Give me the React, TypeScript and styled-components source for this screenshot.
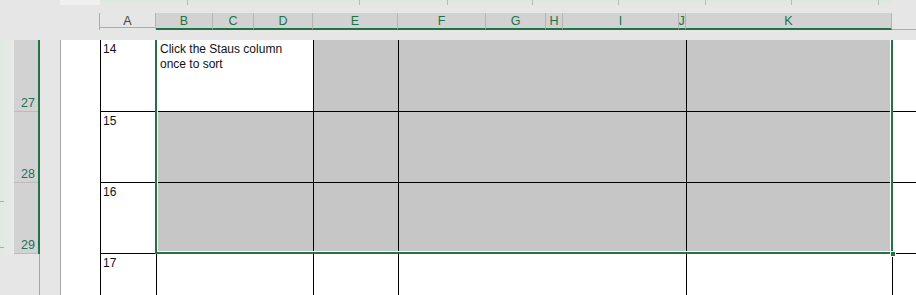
import React from "react";
import styled, { createGlobalStyle } from "styled-components";

const GREEN = "#217346";

const GlobalStyle = createGlobalStyle`
  html, body {
    margin: 0;
    padding: 0;
    background: #e6e6e6;
    overflow: hidden;
  }
`;

const headerCols = [
  { label: "A", width: 56, selected: false },
  { label: "B", width: 57, selected: true },
  { label: "C", width: 41, selected: true },
  { label: "D", width: 59, selected: true },
  { label: "E", width: 85, selected: true },
  { label: "F", width: 88, selected: true },
  { label: "G", width: 60, selected: true },
  { label: "H", width: 17, selected: true },
  { label: "I", width: 116, selected: true },
  { label: "J", width: 7, selected: true },
  { label: "K", width: 206, selected: true },
];

const ticks = [87, 259, 347, 432, 518, 605, 691, 778];

const rowHeaders = [
  { label: "27", height: 72 },
  { label: "28", height: 71 },
  { label: "29", height: 71 },
];

type CellKind = "white" | "grey";

const rows: { num: string; height: number; cells: CellKind[]; note?: string }[] = [
  { num: "14", height: 72, cells: ["white", "grey", "grey", "grey"], note: "Click the Staus column once to sort" },
  { num: "15", height: 71, cells: ["grey", "grey", "grey", "grey"] },
  { num: "16", height: 71, cells: ["grey", "grey", "grey", "grey"] },
  { num: "17", height: 60, cells: ["white", "white", "white", "white"] },
];

// widths of the merged body columns, each including its 1px right border
const bodyWidths = [56, 157, 85, 288, 206];

const Page = styled.div`
  width: 916px;
  height: 295px;
  background: #e6e6e6;
  font-family: "Liberation Sans", Arial, sans-serif;
  display: flex;
  flex-direction: column;
  overflow: hidden;
`;

const TopStrip = styled.div`
  height: 13px;
  display: flex;
  flex-shrink: 0;
`;

const StripBlank = styled.div<{ $w: number }>`
  width: ${(p) => p.$w}px;
  flex-shrink: 0;
`;

const StripLight = styled.div`
  width: 40px;
  height: 5px;
  background: #f0f0f0;
`;

const StripRuler = styled.div`
  position: relative;
  width: 792px;
  height: 5px;
  background: linear-gradient(#dce8df, #e4e8e5);
`;

const Tick = styled.span`
  position: absolute;
  top: 0;
  width: 1px;
  height: 5px;
  background: #b8bcb9;
`;

const HeaderRow = styled.div`
  height: 17px;
  display: flex;
  flex-shrink: 0;
`;

const HeaderLead = styled.div`
  width: 99px;
  flex-shrink: 0;
`;

const HeaderCells = styled.div`
  display: flex;
  border-left: 1px solid #ababab;
`;

const ColHead = styled.div<{ $w: number; $sel: boolean }>`
  width: ${(p) => p.$w - 1}px;
  height: 15px;
  border-right: 1px solid #b4b4b4;
  border-bottom: 2px solid ${(p) => (p.$sel ? GREEN : "transparent")};
  box-shadow: ${(p) => (p.$sel ? "none" : "inset 0 -1px 0 #ababab")};
  background: ${(p) => (p.$sel ? "#d2d2d2" : "#e6e6e6")};
  color: ${(p) => (p.$sel ? GREEN : "#444")};
  font-size: 12.5px;
  line-height: 16px;
  text-align: center;
  overflow: hidden;
  flex-shrink: 0;
`;

const HeaderTail = styled.div`
  flex: 1;
  height: 16px;
  border-bottom: 1px solid #ababab;
`;

const Band = styled.div`
  height: 10px;
  flex-shrink: 0;
`;

const Body = styled.div`
  flex: 1;
  display: flex;
  overflow: hidden;
`;

const LeftRail = styled.div`
  width: 100px;
  display: flex;
  flex-shrink: 0;
`;

const Gutter = styled.div`
  width: 14px;
  display: flex;
  flex-direction: column;
`;

const GutterTinted = styled.div`
  height: 214px;
  background: linear-gradient(90deg, #dfe9e2, #e8ebe9);
  display: flex;
  flex-direction: column;
  justify-content: flex-end;
  gap: 45px;
  padding-bottom: 6px;
  box-sizing: border-box;
`;

const GutterTick = styled.span`
  width: 4px;
  height: 1px;
  background: #a9a9a9;
`;

const RowHeads = styled.div`
  width: 25px;
  display: flex;
  flex-direction: column;
  border-right: 1px solid #a6a6a6;
`;

const RowHeadStack = styled.div`
  display: flex;
  flex-direction: column;
  border-right: 2px solid ${GREEN};
  margin-right: -1px;
`;

const RowHead = styled.div<{ $h: number }>`
  height: ${(p) => p.$h - 1}px;
  border-bottom: 1px solid #bcbcbc;
  background: #d2d2d2;
  color: #1f6f5a;
  font-size: 12.5px;
  display: flex;
  align-items: flex-end;
  justify-content: flex-end;
  padding-right: 3px;
  line-height: 15px;
`;

const RailGap = styled.div`
  width: 20px;
  border-right: 1px solid #a6a6a6;
`;

const RailWhite = styled.div`
  width: 39px;
  background: #fff;
`;

const GridWrap = styled.div`
  position: relative;
  flex: 1;
  background: #fff;
`;

const Grid = styled.div`
  display: grid;
  grid-template-columns: ${bodyWidths.map((w) => `${w}px`).join(" ")} 1fr;
  border-left: 1px solid #000;
`;

const Cell = styled.div<{ $h: number; $kind: CellKind; $last?: boolean }>`
  height: ${(p) => p.$h}px;
  box-sizing: border-box;
  background: ${(p) => (p.$kind === "grey" ? "#c6c6c6" : "#fff")};
  border-right: ${(p) => (p.$last ? "none" : "1px solid #000")};
  border-bottom: 1px solid #000;
  font-size: 12px;
  line-height: 15px;
  color: #111;
  padding: 2px 0 0 3px;
  overflow: hidden;
`;

const NumCell = styled(Cell)`
  padding-left: 2px;
`;

const Note = styled.div`
  width: 140px;
`;

const Selection = styled.div`
  position: absolute;
  left: 55px;
  top: -10px;
  width: 734px;
  height: 220px;
  border: 2px solid ${GREEN};
  box-shadow: inset 0 0 0 1px #fff;
  pointer-events: none;
`;

const Handle = styled.span`
  position: absolute;
  right: -5px;
  bottom: -5px;
  width: 4px;
  height: 4px;
  background: ${GREEN};
  border: 1px solid #fff;
`;

export default function App() {
  return (
    <Page>
      <GlobalStyle />
      <TopStrip>
        <StripBlank $w={60} />
        <StripLight />
        <StripRuler>
          {ticks.map((t) => (
            <Tick key={t} style={{ left: t }} />
          ))}
        </StripRuler>
      </TopStrip>
      <HeaderRow>
        <HeaderLead />
        <HeaderCells>
          {headerCols.map((c) => (
            <ColHead key={c.label} $w={c.width} $sel={c.selected}>
              {c.width > 10 ? c.label : <span style={{ marginLeft: -1 }}>{c.label}</span>}
            </ColHead>
          ))}
        </HeaderCells>
        <HeaderTail />
      </HeaderRow>
      <Band />
      <Body>
        <LeftRail>
          <Gutter>
            <GutterTinted>
              <GutterTick />
              <GutterTick />
            </GutterTinted>
          </Gutter>
          <RowHeads>
            <RowHeadStack>
              {rowHeaders.map((r) => (
                <RowHead key={r.label} $h={r.height}>
                  {r.label}
                </RowHead>
              ))}
            </RowHeadStack>
          </RowHeads>
          <RailGap />
          <RailWhite />
        </LeftRail>
        <GridWrap>
          <Grid>
            {rows.map((r) => (
              <React.Fragment key={r.num}>
                <NumCell $h={r.height} $kind="white">
                  {r.num}
                </NumCell>
                {r.cells.map((k, i) => (
                  <Cell key={i} $h={r.height} $kind={k}>
                    {i === 0 && r.note ? <Note>{r.note}</Note> : null}
                  </Cell>
                ))}
                <Cell $h={r.height} $kind="white" $last />
              </React.Fragment>
            ))}
          </Grid>
          <Selection>
            <Handle />
          </Selection>
        </GridWrap>
      </Body>
    </Page>
  );
}
